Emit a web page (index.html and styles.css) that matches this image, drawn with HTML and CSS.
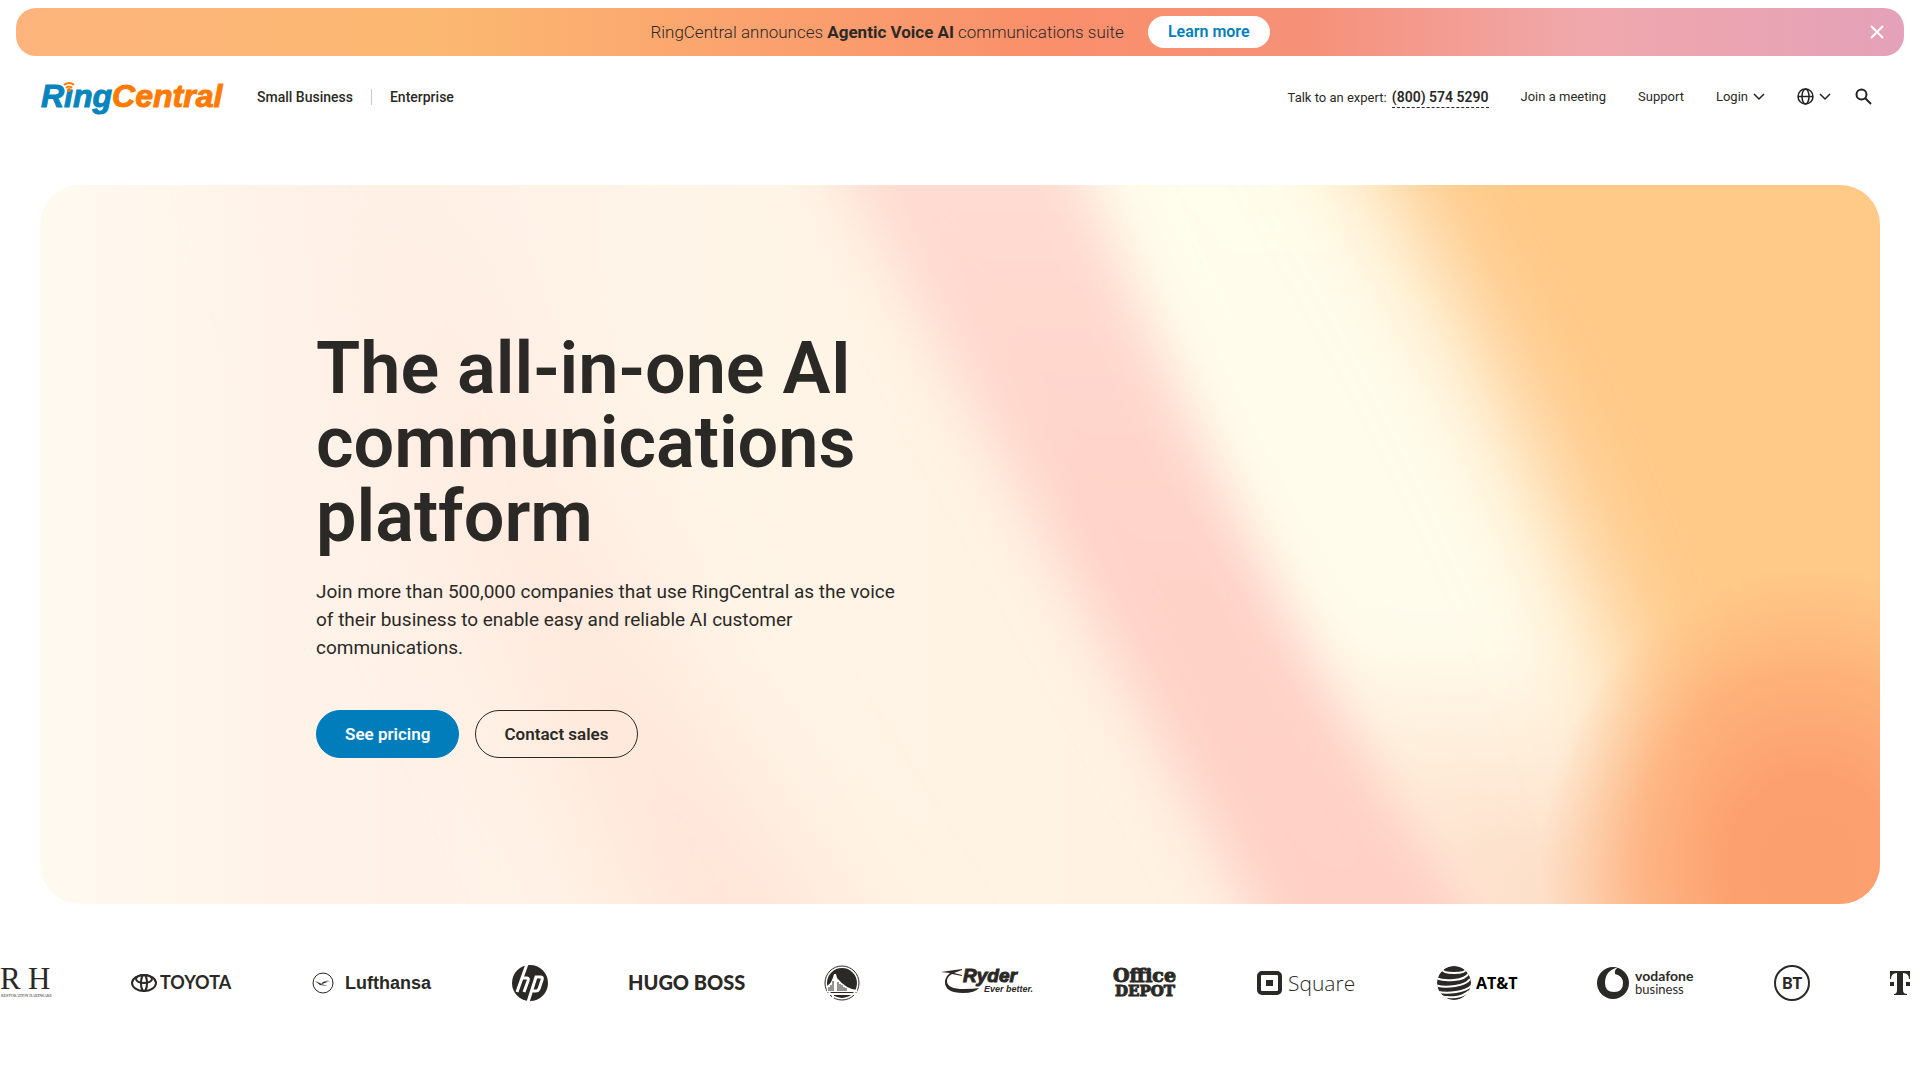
FILE: index.html
```html
<!DOCTYPE html>
<html lang="en">

<head>
    <meta charset="UTF-8">
    <meta name="viewport" content="width=device-width, initial-scale=1.0">
    <title>RingCentral</title>
    <link rel="stylesheet" href="styles.css">
</head>

<body>
    <div class="banner">
        <p>RingCentral announces <b>Agentic Voice AI</b> communications suite</p>
        <a class="banner-btn" href="#">Learn more</a>
        <button class="close" aria-label="Close">
            <svg width="14" height="14" viewBox="0 0 14 14"><path d="M1 1l12 12M13 1L1 13" /></svg>
        </button>
    </div>

    <header class="header">
        <a class="logo" href="#" aria-label="RingCentral">
            <svg width="186" height="40" viewBox="0 0 186 40">
                <text class="logo-text" x="1" y="30"><tspan class="blue">Rıng</tspan><tspan class="orange">Central</tspan></text>
                <g class="logo-wave">
                    <circle cx="29" cy="13" r="1" />
                    <path d="M26 11q3-3 6 0M24 8q5-4 10 0" />
                </g>
            </svg>
        </a>
        <nav class="segments">
            <a href="#">Small Business</a>
            <a href="#">Enterprise</a>
        </nav>
        <nav class="tools">
            <span class="expert">Talk to an expert: <a href="#">(800) 574 5290</a></span>
            <a href="#">Join a meeting</a>
            <a href="#">Support</a>
            <button class="login">Login
                <svg width="12" height="8" viewBox="0 0 12 8"><path d="M1 1l5 5 5-5" /></svg>
            </button>
            <button class="lang" aria-label="Language">
                <svg width="17" height="17" viewBox="0 0 17 17"><circle cx="8.500" cy="8.500" r="7.500" /><ellipse cx="8.500" cy="8.500" rx="3.500" ry="7.500" /><path d="M1 8.500h15" /></svg>
                <svg width="12" height="8" viewBox="0 0 12 8"><path d="M1 1l5 5 5-5" /></svg>
            </button>
            <button class="search" aria-label="Search">
                <svg width="17" height="17" viewBox="0 0 17 17"><circle cx="6.500" cy="6.500" r="5" /><path d="M10 10l6 6" /></svg>
            </button>
        </nav>
    </header>

    <main class="hero">
        <svg class="hero-bg" viewBox="0 0 1840 719" preserveAspectRatio="none" aria-hidden="true">
            <defs>
                <linearGradient id="base">
                    <stop offset="0" stop-color="#fffaf0" />
                    <stop offset=".1" stop-color="#fff4ea" />
                    <stop offset=".2" stop-color="#fff1e7" />
                    <stop offset=".38" stop-color="#fff5e7" />
                    <stop offset=".6" stop-color="#fff2e2" />
                </linearGradient>
                <linearGradient id="peach" x2="0" y2="1">
                    <stop offset=".1" stop-color="#fff0e6" />
                    <stop offset="1" stop-color="#fee3d5" />
                </linearGradient>
                <linearGradient id="pink" x2="0" y2="1">
                    <stop offset=".1" stop-color="#ffdbd1" />
                    <stop offset=".5" stop-color="#ffd3c9" />
                    <stop offset="1" stop-color="#ffcfc5" />
                </linearGradient>
                <linearGradient id="cream" x2="0" y2="1">
                    <stop offset="0" stop-color="#fffdec" />
                    <stop offset=".6" stop-color="#fffcec" />
                    <stop offset=".85" stop-color="#fddfc9" />
                </linearGradient>
                <radialGradient id="red">
                    <stop offset="0" stop-color="#fc9f6f" />
                    <stop offset=".3" stop-color="#fca070" />
                    <stop offset=".65" stop-color="#fda873" stop-opacity=".7" />
                    <stop offset="1" stop-color="#fdb47c" stop-opacity="0" />
                </radialGradient>
                <filter id="soft" x="-50%" y="-50%" width="200%" height="200%"><feGaussianBlur stdDeviation="30" /></filter>
                <filter id="wide" x="-50%" y="-50%" width="200%" height="200%"><feGaussianBlur stdDeviation="56" /></filter>
            </defs>
            <rect width="1840" height="719" fill="url(#base)" />
            <path d="M240-80L400-80Q510 300 860 820L640 820Q420 420 240-80Z" fill="url(#peach)" filter="url(#wide)" />
            <path d="M750-100L1060-100Q1240 460 1520 820L1260 820Q980 300 750-100Z" fill="url(#pink)" filter="url(#soft)" />
            <path d="M1010-100L1340-100L1740 820L1510 820Q1230 450 1010-100Z" fill="url(#cream)" filter="url(#soft)" />
            <path d="M1265-140L2000-140L2000 860L1680 860Q1620 420 1265-140Z" fill="#ffc987" filter="url(#wide)" />
            <ellipse cx="1770" cy="680" rx="270" ry="300" fill="url(#red)" />
        </svg>
        <div class="hero-text">
            <h1>The all-in-one AI communications platform</h1>
            <p>Join more than 500,000 companies that use RingCentral as the voice of their business to enable easy and reliable AI customer communications.</p>
            <div class="actions">
                <a class="btn btn-blue" href="#">See pricing</a>
                <a class="btn btn-line" href="#">Contact sales</a>
            </div>
        </div>
    </main>

    <section class="brands" aria-label="Customers">
        <svg width="51" height="36" viewBox="0 0 51 36">
            <text class="serif" y="24" font-size="31"><tspan x="0">R</tspan><tspan x="28">H</tspan></text>
            <text class="serif" x="1" y="32" font-size="4">RESTORATION HARDWARE</text>
        </svg>
        <svg width="101" height="36" viewBox="0 0 101 36">
            <g fill="none" stroke="#2b2926" stroke-width="2"><ellipse cx="13" cy="18" rx="12" ry="8" /><ellipse cx="13" cy="14" rx="8" ry="4" /><ellipse cx="13" cy="18" rx="3" ry="8" /></g>
            <text class="lato" x="29" y="24" font-size="18">TOYOTA</text>
        </svg>
        <svg width="120" height="36" viewBox="0 0 120 36">
            <circle cx="11" cy="18" r="10" fill="none" stroke="#2b2926" />
            <path d="M3 16l7 3 8-3-5 1 4-2-6 2-3 3zM9 19l7 2-8-1z" />
            <text class="heavy" x="33" y="24" font-size="18">Lufthansa</text>
        </svg>
        <svg width="36" height="36" viewBox="0 0 36 36">
            <circle cx="18" cy="18" r="18" />
            <g fill="none" stroke="#fff" stroke-width="3"><path d="M15-1L5 27M10 13h5q2 0 1 3l-4 11M16 37L24 12h5q2 0 1 3l-3 9q-1 2-3 2h-4" /></g>
        </svg>
        <svg width="116" height="36" viewBox="0 0 116 36">
            <text class="lato black" y="25" font-size="20">HUGO BOSS</text>
        </svg>
        <svg width="37" height="36" viewBox="0 0 37 36">
            <circle cx="18" cy="18" r="17" fill="none" stroke="#2b2926" />
            <circle cx="18" cy="18" r="15" />
            <path d="M10 9h2l1 4q9 11 20 12v2H3v-6q5-3 7-12zM3 28h30v2H10v3h-2v-3H3z" fill="#fff" />
            <path d="M5 22v4M7 20v6M9 16v10M14 17v9M16 19v7M18 20v6M20 22v4M22 23v3" stroke="#2b2926" />
        </svg>
        <svg width="92" height="36" viewBox="0 0 92 36">
            <path d="M0 7l21-3v1l-8 3 8 2v1l-10-2q-5 3-5 7 0 8 17 8 9 0 15-1-4 5-16 5Q4 28 4 17q0-5 5-9z" />
            <text class="heavy italic outline" x="22" y="17" font-size="19">Ryder</text>
            <text class="heavy italic" x="43" y="27" font-size="9">Ever better.</text>
        </svg>
        <svg width="64" height="36" viewBox="0 0 64 36">
            <text class="slab outline" y="17" font-size="19">Office</text>
            <text class="slab outline" x="2" y="31" font-size="15">DEPOT</text>
        </svg>
        <svg width="100" height="36" viewBox="0 0 100 36">
            <rect x="2" y="8" width="21" height="20" rx="3" fill="none" stroke="#2b2926" stroke-width="4" />
            <rect x="9" y="15" width="7" height="6" />
            <text class="light" x="31" y="26" font-size="21">Square</text>
        </svg>
        <svg width="80" height="36" viewBox="0 0 80 36">
            <clipPath id="globe"><circle cx="17" cy="18" r="17" /></clipPath>
            <g clip-path="url(#globe)">
                <circle cx="17" cy="18" r="17" />
                <path d="M5 4q0 4 12 4t12-4M-1 13q6 3 18 2t15-7M-2 20q8 3 20 1t15-7M-1 26q8 3 20 1t16-7M3 31q8 2 16 1t13-6" fill="none" stroke="#fff" stroke-width="2" />
            </g>
            <text class="att" x="39" y="24" font-size="16">AT&amp;T</text>
        </svg>
        <svg width="97" height="36" viewBox="0 0 97 36">
            <circle cx="16" cy="18" r="16" />
            <path d="M22 2Q17 4 18 9q8 2 8 9 0 9-9 9t-9-9Q8 5 22 2z" fill="#fff" />
            <text class="lato" x="38" y="16" font-size="14">vodafone</text>
            <text class="thin" x="38" y="29" font-size="13">business</text>
        </svg>
        <svg width="36" height="36" viewBox="0 0 36 36">
            <circle cx="18" cy="18" r="17" fill="none" stroke="#2b2926" stroke-width="2" />
            <text class="lato black" x="8" y="24" font-size="16">BT</text>
        </svg>
        <svg width="20" height="36" viewBox="0 0 20 36">
            <path d="M0 6h20v8h-1q0-6-6-6v17q0 4 4 4v1H4v-1q3 0 3-4V8q-6 0-6 6H0zM0 17h4v4H0zM16 17h4v4h-4z" />
        </svg>
    </section>
</body>

</html>
```
FILE: styles.css
```css
* {
    margin: 0;
    padding: 0;
    box-sizing: border-box;
}

body {
    font-family: Roboto, "Liberation Sans", sans-serif;
    color: #2b2926;
    background: #fff;
    overflow-x: hidden;
}

a {
    color: inherit;
    text-decoration: none;
}

button {
    font: inherit;
    color: inherit;
    background: none;
    border: none;
    cursor: pointer;
}

.banner {
    position: relative;
    display: flex;
    align-items: center;
    justify-content: center;
    gap: 24px;
    height: 48px;
    margin: 8px 16px 0;
    border-radius: 20px;
    background: linear-gradient(90deg, #fdb47c 0%, #fbb871 22%, #fba36f 38%, #f98f6b 55%, #f69077 68%, #f0a8ac 83%, #e4a1b9 100%);
    font-size: 17px;
    font-weight: 300;
}

.banner b {
    font-weight: 700;
}

.banner-btn {
    padding: 0 20px;
    border-radius: 16px;
    background: #fff;
    color: #0080bd;
    font-size: 16px;
    font-weight: 600;
    line-height: 32px;
}

.close {
    position: absolute;
    right: 20px;
    display: flex;
}

.close svg {
    fill: none;
    stroke: #fff;
    stroke-width: 2;
}

.header {
    display: flex;
    align-items: center;
    height: 81px;
    padding: 0 48px 0 40px;
}

.logo {
    display: flex;
}

.logo-text {
    font: italic 700 32px "Liberation Sans", sans-serif;
    stroke-width: 1px;
}

.blue {
    fill: #0684bd;
    stroke: #0684bd;
}

.orange {
    fill: #ff7a00;
    stroke: #ff7a00;
}

.logo-wave {
    fill: none;
    stroke: #ff7a00;
    stroke-width: 2;
}

.segments {
    display: flex;
    margin-left: 31px;
    font-size: 14px;
    font-weight: 500;
}

.segments a + a {
    margin-left: 18px;
    padding-left: 18px;
    border-left: 1px solid #ccc;
}

.tools {
    display: flex;
    align-items: center;
    gap: 32px;
    margin-left: auto;
    font-size: 13px;
}

.expert a {
    margin-left: 2px;
    padding-bottom: 2px;
    border-bottom: 1px dashed #2b2926;
    font-size: 14px;
    font-weight: 600;
}

.tools button {
    display: flex;
    align-items: center;
    gap: 5px;
}

.tools svg {
    fill: none;
    stroke: #222;
    stroke-width: 1.5;
}

.tools .search {
    margin-left: -8px;
}

.tools .search svg {
    stroke-width: 2;
}

.hero {
    position: relative;
    display: flex;
    align-items: center;
    min-height: 719px;
    margin: 48px 40px 0;
    padding: 0 276px;
    border-radius: 40px;
    overflow: hidden;
}

.hero-bg {
    position: absolute;
    top: 0;
    left: 0;
    width: 100%;
    height: 100%;
}

.hero-text {
    position: relative;
    max-width: 592px;
}

.hero h1 {
    font-size: 72px;
    font-weight: 600;
    line-height: 74px;
}

.hero p {
    margin-top: 24px;
    font-size: 19px;
    font-weight: 400;
    line-height: 28px;
}

.actions {
    display: flex;
    gap: 16px;
    margin-top: 48px;
}

.btn {
    padding: 0 28px;
    border: 1px solid #2b2926;
    border-radius: 24px;
    font-size: 17px;
    font-weight: 600;
    line-height: 46px;
}

.btn-blue {
    border-color: #007dba;
    background: #007dba;
    color: #fff;
}

.brands {
    display: flex;
    gap: 80px;
    margin-top: 61px;
    overflow: hidden;
}

.brands svg {
    flex: none;
    fill: #2b2926;
    overflow: visible;
}

.brands .serif {
    font-family: "Liberation Serif", serif;
}

.brands .lato {
    font-family: Lato, sans-serif;
    font-weight: 700;
}

.brands .black {
    font-weight: 900;
}

.brands .heavy {
    font-family: "Liberation Sans", sans-serif;
    font-weight: 700;
}

.brands .italic {
    font-style: italic;
}

.brands .outline {
    stroke: #2b2926;
    stroke-width: 1px;
}

.brands .slab {
    font-family: "DejaVu Serif", serif;
    font-weight: 700;
}

.brands .light {
    font-family: "Open Sans", sans-serif;
    font-weight: 300;
}

.brands .thin {
    font-family: Lato, sans-serif;
}

.brands .att {
    font-family: "Open Sans", sans-serif;
    font-weight: 700;
    fill: #000;
}
```
